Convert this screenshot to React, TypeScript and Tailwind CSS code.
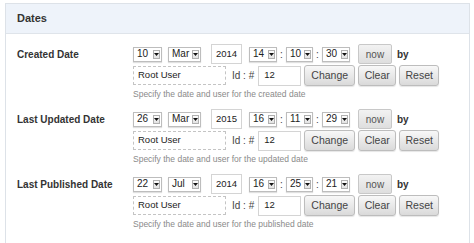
import React from "react";

const font = { fontFamily: '"Liberation Sans", Arial, Helvetica, sans-serif' };

function Sel({ v, w }: { v: string; w: string }) {
  return (
    <div className={`${w} h-[15px] border border-[#bdbdbd] bg-white flex items-center justify-between pl-[3px] pr-[1px] shadow-[0_1px_1px_rgba(0,0,0,0.12)]`}>
      <span className="text-[10px] leading-none text-[#222]">{v}</span>
      <span className="w-[7px] h-[9px] border border-[#b0b0b0] bg-gradient-to-b from-[#fdfdfd] to-[#e2e2e2] flex items-center justify-center">
        <svg width="5" height="3" viewBox="0 0 5 3"><path d="M0 0h5L2.5 3z" fill="#111" /></svg>
      </span>
    </div>
  );
}

function Btn({ t, w }: { t: string; w: string }) {
  return (
    <div className={`${w} h-[21px] border border-[#bdbdbd] rounded-[3px] bg-gradient-to-b from-[#f8f8f8] to-[#dadada] flex items-center justify-center text-[10.5px] text-[#444] shadow-[0_1px_1px_rgba(0,0,0,0.1)]`}>
      {t}
    </div>
  );
}

function Row({ label, d, m, y, h, mi, s, what }: { label: string; d: string; m: string; y: string; h: string; mi: string; s: string; what: string }) {
  return (
    <div className="flex mb-[9px]">
      <div className="w-[116px] h-[20px] flex items-center text-[10px] font-bold text-[#333]">{label}</div>
      <div className="flex flex-col">
        <div className="h-[20px] flex items-center">
          <Sel v={d} w="w-[29px]" />
          <div className="w-[6px]" />
          <Sel v={m} w="w-[33px]" />
          <div className="w-[10px]" />
          <div className="w-[31px] h-[20px] border border-[#d4d4d4] bg-white flex items-center pl-[4px] text-[9.5px] text-[#222]">{y}</div>
          <div className="w-[7px]" />
          <Sel v={h} w="w-[28px]" />
          <span className="w-[9px] text-center text-[10px] text-[#444]">:</span>
          <Sel v={mi} w="w-[27px]" />
          <span className="w-[9px] text-center text-[10px] text-[#444]">:</span>
          <Sel v={s} w="w-[28px]" />
          <div className="w-[8px]" />
          <div className="w-[34px] h-[20px] border border-[#c8c8c8] rounded-[2px] bg-gradient-to-b from-[#f2f2f2] to-[#dedede] flex items-center justify-center text-[10px] text-[#555]">now</div>
          <span className="ml-[5px] text-[10px] font-bold text-[#333]">by</span>
        </div>
        <div className="h-[21px] mt-[1px] flex items-center">
          <div className="w-[93px] h-[19px] border border-dashed border-[#c4c4c4] bg-white flex items-center pl-[4px] text-[9.5px] text-[#222]">Root User</div>
          <span className="ml-[6px] text-[10px] text-[#444]">Id : #</span>
          <div className="ml-[4px] w-[43px] h-[20px] border border-[#d4d4d4] bg-white flex items-center pl-[5px] text-[9.5px] text-[#222]">12</div>
          <div className="w-[3px]" />
          <Btn t="Change" w="w-[51px]" />
          <div className="w-[3px]" />
          <Btn t="Clear" w="w-[38px]" />
          <div className="w-[3px]" />
          <Btn t="Reset" w="w-[40px]" />
        </div>
        <div className="mt-[2px] h-[12px] leading-[12px] text-[8.5px] text-[#8a8a8a]">Specify the date and user for the {what} date</div>
      </div>
    </div>
  );
}

export default function App() {
  return (
    <div className="w-[474px] h-[243px] bg-white overflow-hidden pt-[3px] pl-[5px] pr-[4px]" style={font}>
      <div className="h-[260px] border-l border-r border-t border-[#dde2e8]">
        <div className="h-[30px] bg-[#eef3fa] border-b border-[#dfe4ea] flex items-center pl-[11px] text-[11px] font-bold text-[#333]">Dates</div>
        <div className="pl-[11px] pt-[10px]">
          <Row label="Created Date" d="10" m="Mar" y="2014" h="14" mi="10" s="30" what="created" />
          <Row label="Last Updated Date" d="26" m="Mar" y="2015" h="16" mi="11" s="29" what="updated" />
          <Row label="Last Published Date" d="22" m="Jul" y="2014" h="16" mi="25" s="21" what="published" />
        </div>
      </div>
    </div>
  );
}
